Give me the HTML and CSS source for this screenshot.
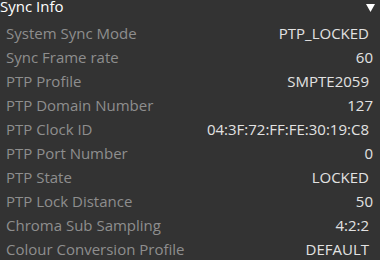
FILE: index.html
```
<!DOCTYPE html>
<html>
<head>
<meta charset="utf-8">
<link rel="stylesheet" href="styles.css">
</head>
<body>
<div class="panel">
  <div class="header">
    <span class="title">Sync Info</span>
    <svg class="caret" width="9" height="8" viewBox="0 0 9 8"><polygon points="0,0 9,0 4.5,8" fill="#ffffff"/></svg>
  </div>
  <div class="rows">
    <div class="row"><span class="label">System Sync Mode</span><span class="value">PTP_LOCKED</span></div>
    <div class="row"><span class="label">Sync Frame rate</span><span class="value num">60</span></div>
    <div class="row"><span class="label">PTP Profile</span><span class="value">SMPTE2059</span></div>
    <div class="row"><span class="label">PTP Domain Number</span><span class="value num">127</span></div>
    <div class="row"><span class="label">PTP Clock ID</span><span class="value">04:3F:72:FF:FE:30:19:C8</span></div>
    <div class="row"><span class="label">PTP Port Number</span><span class="value num">0</span></div>
    <div class="row"><span class="label">PTP State</span><span class="value">LOCKED</span></div>
    <div class="row"><span class="label">PTP Lock Distance</span><span class="value num">50</span></div>
    <div class="row"><span class="label">Chroma Sub Sampling</span><span class="value">4:2:2</span></div>
    <div class="row"><span class="label">Colour Conversion Profile</span><span class="value">DEFAULT</span></div>
  </div>
</div>
</body>
</html>
```
FILE: styles.css
```
html, body {
  margin: 0;
  padding: 0;
  background: #333333;
}
.panel {
  width: 380px;
  height: 260px;
  background: #333333;
  font-family: "Open Sans", "Noto Sans", sans-serif;
  font-size: 15px;
  overflow: hidden;
}
.header {
  height: 21px;
  display: flex;
  justify-content: space-between;
  align-items: flex-start;
}
.title {
  color: #ffffff;
  line-height: 13px;
  margin-left: 0;
}
.caret {
  margin-top: 4px;
  margin-right: 5px;
}
.rows {
  display: flex;
  flex-direction: column;
}
.row {
  height: 24px;
  line-height: 24px;
  display: flex;
  justify-content: space-between;
  padding-left: 6px;
  padding-right: 11px;
}
.label {
  color: #8e8e8e;
}
.value {
  color: #e2e2e2;
}
.value.num {
  margin-right: -4px;
}
```
